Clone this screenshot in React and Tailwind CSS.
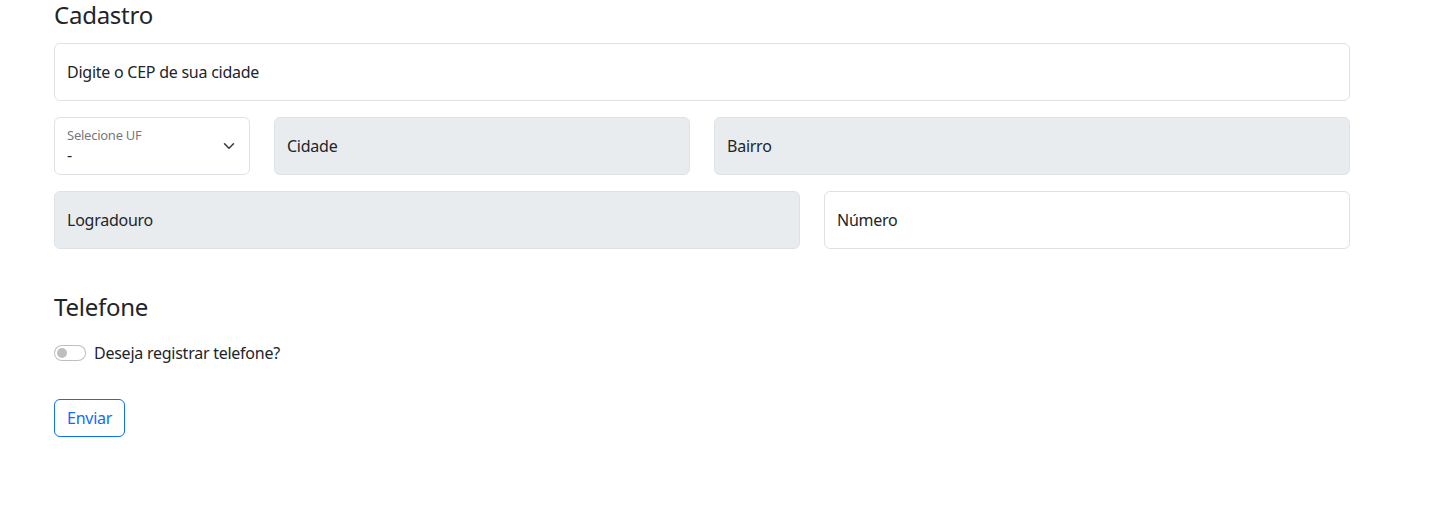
export default function App() {
  const font = { fontFamily: '"Noto Sans", "Open Sans", sans-serif' };
  return (
    <div className="min-h-screen bg-white text-[#212529] tracking-[-0.25px]" style={font}>
      <form className="ml-[54px] w-[1296px]">
        <h4 className="text-[24px] leading-[29px] font-normal">Cadastro</h4>

        {/* CEP */}
        <div className="mt-[14px] h-[58px] border border-[#dee2e6] rounded-[6px] flex items-center px-3 text-[16px]">
          Digite o CEP de sua cidade
        </div>

        <div className="mt-4 flex gap-6">
          {/* UF select */}
          <div className="w-[196px] h-[58px] border border-[#dee2e6] rounded-[6px] relative px-3 bg-white">
            <div className="absolute left-3 top-[8px] text-[13px] leading-[18px] text-[#212529]/65">Selecione UF</div>
            <div className="absolute left-3 top-[25px] text-[16px] leading-6">-</div>
            <svg className="absolute right-3 top-[22px]" width="16" height="12" viewBox="0 0 16 16" fill="none">
              <path d="m2 5 6 6 6-6" stroke="#343a40" strokeWidth="2" strokeLinecap="round" strokeLinejoin="round" />
            </svg>
          </div>
          <div className="w-[416px] h-[58px] border border-[#dee2e6] rounded-[6px] bg-[#e9ecef] flex items-center px-3 text-[16px]">
            Cidade
          </div>
          <div className="w-[636px] h-[58px] border border-[#dee2e6] rounded-[6px] bg-[#e9ecef] flex items-center px-3 text-[16px]">
            Bairro
          </div>
        </div>

        <div className="mt-4 flex gap-6">
          <div className="w-[746px] h-[58px] border border-[#dee2e6] rounded-[6px] bg-[#e9ecef] flex items-center px-3 text-[16px]">
            Logradouro
          </div>
          <div className="w-[526px] h-[58px] border border-[#dee2e6] rounded-[6px] flex items-center px-3 text-[16px]">
            Número
          </div>
        </div>

        <h4 className="mt-[43px] text-[24px] leading-[29px] font-normal">Telefone</h4>

        <div className="mt-[20px] flex items-center gap-2 h-6 text-[16px]">
          <span className="w-8 h-4 rounded-full border border-black/25 relative bg-white">
            <span className="absolute left-[2px] top-[2px] w-[10px] h-[10px] rounded-full bg-black/25" />
          </span>
          Deseja registrar telefone?
        </div>

        <button
          type="button"
          className="mt-[34px] h-[38px] px-3 border border-[#0d6efd] text-[#0d6efd] rounded-[6px] text-[16px] bg-white"
        >
          Enviar
        </button>
      </form>
    </div>
  );
}
